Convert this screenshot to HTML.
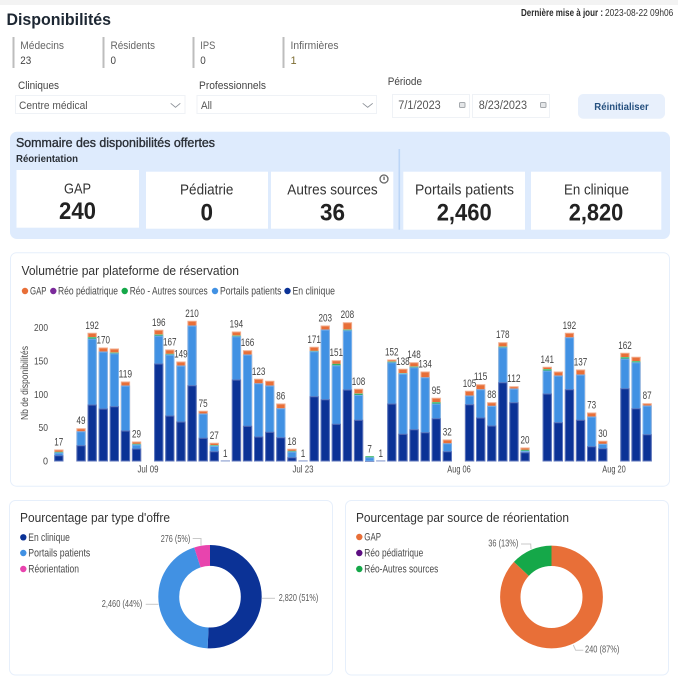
<!DOCTYPE html>
<html lang="fr">
<head>
<meta charset="utf-8">
<title>Disponibilités</title>
<style>
html,body{margin:0;padding:0;background:#fff;width:678px;height:681px;overflow:hidden}
svg{display:block}
text{font-family:"Liberation Sans",sans-serif;fill:#444}
.n{font-size:10.8px;fill:#444;text-anchor:middle}
.ax{font-size:10.5px;fill:#4a4a4a}
.lg{font-size:10.8px;fill:#4a4a4a}
.t{font-size:13px;fill:#333}
.k{font-size:11px;fill:#666}
.v{font-size:11px;fill:#444}
.f{font-size:11px;fill:#444}
.cl{font-size:14.5px;fill:#333;text-anchor:middle}
.cv{font-size:24px;font-weight:bold;fill:#222;text-anchor:middle}
.d{font-size:10.5px;fill:#5a5a5a}
.card{fill:#fff;stroke:#e6effb;stroke-width:1}
.in{fill:#fff;stroke:#eff2f6;stroke-width:1}
.w{fill:#fff}
.ln{fill:none;stroke:#c8c8c8;stroke-width:1}
</style>
</head>
<body>
<svg width="678" height="681" viewBox="0 0 678 681" xmlns="http://www.w3.org/2000/svg">
<rect x="0" y="0" width="678" height="5" fill="#f3f3f3"/>

<!-- Header -->
<text x="6.5" y="25" font-size="17" font-weight="bold" style="fill:#1d2733" textLength="104.5" lengthAdjust="spacingAndGlyphs">Disponibilités</text>
<text x="521" y="16" font-size="10" font-weight="bold" style="fill:#2b2b2b" textLength="82" lengthAdjust="spacingAndGlyphs">Dernière mise à jour :</text>
<text x="605" y="16" font-size="10" style="fill:#333" textLength="68.3" lengthAdjust="spacingAndGlyphs">2023-08-22 09h06</text>

<!-- KPI -->
<g fill="#bdbdbd">
<rect x="12.5" y="37" width="2" height="31"/>
<rect x="102.5" y="37" width="2" height="31"/>
<rect x="192.5" y="37" width="2" height="31"/>
<rect x="282.5" y="37" width="2" height="31"/>
</g>
<text class="k" x="20.3" y="49" textLength="43.7" lengthAdjust="spacingAndGlyphs">Médecins</text>
<text class="v" x="20.3" y="64" textLength="11" lengthAdjust="spacingAndGlyphs">23</text>
<text class="k" x="110.5" y="49" textLength="44.5" lengthAdjust="spacingAndGlyphs">Résidents</text>
<text class="v" x="110.5" y="64" textLength="5.5" lengthAdjust="spacingAndGlyphs">0</text>
<text class="k" x="200.3" y="49" textLength="15" lengthAdjust="spacingAndGlyphs">IPS</text>
<text class="v" x="200.3" y="64" textLength="5.5" lengthAdjust="spacingAndGlyphs">0</text>
<text class="k" x="290.5" y="49" textLength="48" lengthAdjust="spacingAndGlyphs">Infirmières</text>
<text class="v" x="290.5" y="64" style="fill:#7d6d33">1</text>

<!-- Filters -->
<text class="f" x="18" y="89" textLength="41" lengthAdjust="spacingAndGlyphs">Cliniques</text>
<rect class="in" x="15.5" y="95.5" width="169.5" height="18"/>
<text class="f" x="19" y="109" style="fill:#555" textLength="68.5" lengthAdjust="spacingAndGlyphs">Centre médical</text>
<path d="M170.7 103.3l4.8 4 4.8-4" fill="none" stroke="#8a8f96" stroke-width=".9"/>

<text class="f" x="199" y="89" textLength="67" lengthAdjust="spacingAndGlyphs">Professionnels</text>
<rect class="in" x="197" y="95.5" width="179.5" height="18"/>
<text class="f" x="201" y="109" style="fill:#555" textLength="11" lengthAdjust="spacingAndGlyphs">All</text>
<path d="M362.7 103.3l5 4 5-4" fill="none" stroke="#8a8f96" stroke-width=".9"/>

<text class="f" x="387.7" y="85" textLength="34.3" lengthAdjust="spacingAndGlyphs">Période</text>
<rect class="in" x="392.5" y="94.5" width="77" height="23"/>
<text x="398.3" y="109" font-size="11.5" style="fill:#555" textLength="42.4" lengthAdjust="spacingAndGlyphs">7/1/2023</text>
<rect x="459.5" y="102.5" width="5.5" height="5" rx="1" fill="#e4e6e8" stroke="#a5a9ad" stroke-width="1"/>
<rect class="in" x="472.5" y="94.5" width="77" height="23"/>
<text x="478.7" y="109" font-size="11.5" style="fill:#555" textLength="48.3" lengthAdjust="spacingAndGlyphs">8/23/2023</text>
<rect x="540.5" y="102.5" width="5.5" height="5" rx="1" fill="#e4e6e8" stroke="#a5a9ad" stroke-width="1"/>

<rect x="578" y="94" width="87" height="24.7" rx="5.5" fill="#e8f0fc"/>
<text x="594.3" y="110" font-size="10.5" font-weight="bold" style="fill:#25507f" textLength="54.4" lengthAdjust="spacingAndGlyphs">Réinitialiser</text>

<!-- Summary -->
<rect x="10" y="131.7" width="660" height="107.3" rx="7" fill="#deebfd"/>
<text x="16" y="147" font-size="13" style="fill:#2a2f36;stroke:#2a2f36;stroke-width:.35" textLength="199" lengthAdjust="spacingAndGlyphs">Sommaire des disponibilités offertes</text>
<text x="16" y="162" font-size="10" font-weight="bold" style="fill:#2a2f36" textLength="62" lengthAdjust="spacingAndGlyphs">Réorientation</text>
<rect class="w" x="16.5" y="170" width="122.5" height="57.7"/>
<rect class="w" x="146" y="171.7" width="122" height="57"/>
<rect class="w" x="271" y="171.7" width="122.3" height="57"/>
<rect x="398.5" y="149" width="1.6" height="80.7" fill="#bcd6f7"/>
<rect class="w" x="403.3" y="171.7" width="121.7" height="58"/>
<rect class="w" x="531" y="171.7" width="130.3" height="58"/>

<text class="cl" x="77.5" y="193.3" textLength="27" lengthAdjust="spacingAndGlyphs">GAP</text>
<text class="cv" x="77.5" y="219" textLength="37" lengthAdjust="spacingAndGlyphs">240</text>
<text class="cl" x="206.7" y="194.3" textLength="53.3" lengthAdjust="spacingAndGlyphs">Pédiatrie</text>
<text class="cv" x="206.7" y="220.3" textLength="12.5" lengthAdjust="spacingAndGlyphs">0</text>
<text class="cl" x="332.5" y="194.3" textLength="90.4" lengthAdjust="spacingAndGlyphs">Autres sources</text>
<text class="cv" x="332.5" y="220.3" textLength="25" lengthAdjust="spacingAndGlyphs">36</text>
<text class="cl" x="464.5" y="194.3" textLength="99" lengthAdjust="spacingAndGlyphs">Portails patients</text>
<text class="cv" x="464.2" y="220.3" textLength="55" lengthAdjust="spacingAndGlyphs">2,460</text>
<text class="cl" x="596.5" y="194.3" textLength="65" lengthAdjust="spacingAndGlyphs">En clinique</text>
<text class="cv" x="596" y="220.3" textLength="54.6" lengthAdjust="spacingAndGlyphs">2,820</text>
<circle cx="384" cy="179" r="4" fill="#fff" stroke="#666" stroke-width="1.3"/>
<rect x="383.4" y="176.6" width="1.3" height="3.4" fill="#666"/>

<!-- Volumetry -->
<rect class="card" x="10.5" y="252.7" width="659" height="233.5" rx="6"/>
<text class="t" x="21.5" y="275" textLength="217.5" lengthAdjust="spacingAndGlyphs">Volumétrie par plateforme de réservation</text>
<circle cx="25" cy="291" r="3.2" fill="#e86f38"/>
<text class="lg" x="30" y="294.500" textLength="16.5" lengthAdjust="spacingAndGlyphs">GAP</text>
<circle cx="53.3" cy="291" r="3.2" fill="#7b2a9b"/>
<text class="lg" x="58" y="294.500" textLength="60" lengthAdjust="spacingAndGlyphs">Réo pédiatrique</text>
<circle cx="124.7" cy="291" r="3.2" fill="#15a849"/>
<text class="lg" x="129.7" y="294.500" textLength="78" lengthAdjust="spacingAndGlyphs">Réo - Autres sources</text>
<circle cx="215" cy="291" r="3.2" fill="#4191e3"/>
<text class="lg" x="220" y="294.500" textLength="61.5" lengthAdjust="spacingAndGlyphs">Portails patients</text>
<circle cx="287.5" cy="291" r="3.2" fill="#0b3296"/>
<text class="lg" x="292.5" y="294.500" textLength="42.5" lengthAdjust="spacingAndGlyphs">En clinique</text>

<text class="ax" x="48" y="464.500" text-anchor="end" textLength="5" lengthAdjust="spacingAndGlyphs">0</text>
<text class="ax" x="48" y="431" text-anchor="end" textLength="9.500" lengthAdjust="spacingAndGlyphs">50</text>
<text class="ax" x="48" y="398" text-anchor="end" textLength="14" lengthAdjust="spacingAndGlyphs">100</text>
<text class="ax" x="48" y="364.500" text-anchor="end" textLength="14" lengthAdjust="spacingAndGlyphs">150</text>
<text class="ax" x="48" y="331" text-anchor="end" textLength="14" lengthAdjust="spacingAndGlyphs">200</text>
<text class="ax" transform="translate(28 383) rotate(-90)" text-anchor="middle" textLength="74" lengthAdjust="spacingAndGlyphs">Nb de disponibilités</text>
<text class="ax" x="148" y="472.500" text-anchor="middle" textLength="21" lengthAdjust="spacingAndGlyphs">Jul 09</text>
<text class="ax" x="303" y="472.500" text-anchor="middle" textLength="21" lengthAdjust="spacingAndGlyphs">Jul 23</text>
<text class="ax" x="459" y="472.500" text-anchor="middle" textLength="23.5" lengthAdjust="spacingAndGlyphs">Aug 06</text>
<text class="ax" x="614" y="472.500" text-anchor="middle" textLength="23.5" lengthAdjust="spacingAndGlyphs">Aug 20</text>

<!-- Bars: orange -->
<path fill="#e86f38" stroke="#f2a988" stroke-width="1" d="M54.7 450V461h8.300V450zM76.900 428.700V461h8.300V428.700zM88 333.300V461h8.300V333.300zM99.100 348V461h8.300V348zM110.200 349V461h8.300V349zM121.300 382V461h8.300V382zM132.400 442V461h8.300V442zM154.600 330.300V461h8.300V330.300zM165.700 350V461h8.300V350zM176.800 362V461h8.300V362zM187.900 321.300V461h8.300V321.300zM199 411.300V461h8.300V411.300zM210.100 443.300V461h8.300V443.300zM232.300 332V461h8.300V332zM243.400 350.700V461h8.300V350.700zM254.500 379.300V461h8.300V379.300zM265.600 381.300V461h8.300V381.300zM276.700 404V461h8.300V404zM287.800 449.300V461h8.300V449.300zM310 347.300V461h8.300V347.300zM321.100 326V461h8.300V326zM332.200 360.700V461h8.300V360.700zM343.300 322.700V461h8.300V322.700zM354.400 389.300V461h8.300V389.300zM387.700 360V461h8.300V360zM398.800 369.300V461h8.300V369.300zM409.900 362.700V461h8.300V362.700zM421 372V461h8.300V372zM432.100 398.300V461h8.300V398.300zM443.200 440V461h8.300V440zM465.400 391.300V461h8.300V391.300zM476.500 384.700V461h8.300V384.700zM487.600 402.700V461h8.300V402.700zM498.700 342.700V461h8.300V342.700zM509.800 386.700V461h8.300V386.700zM520.900 448V461h8.300V448zM543.100 367.300V461h8.300V367.300zM554.200 372V461h8.300V372zM565.300 333.300V461h8.300V333.300zM576.400 370V461h8.300V370zM587.500 413V461h8.300V413zM598.600 441.300V461h8.300V441.300zM620.800 353.300V461h8.300V353.300zM631.900 357.300V461h8.300V357.300zM643 403.700V461h8.300V403.700z"/>
<!-- Bars: green -->
<path fill="#15a849" stroke="#8ad4a4" stroke-width=".6" d="M54.7 452V461h8.300V452zM88 337.300V461h8.300V337.300zM110.200 352.700V461h8.300V352.700zM132.400 444V461h8.300V444zM154.600 334.700V461h8.300V334.700zM165.700 354V461h8.300V354zM210.100 445.300V461h8.300V445.300zM232.300 335.700V461h8.300V335.700zM287.800 451V461h8.300V451zM310 351V461h8.300V351zM332.200 364V461h8.300V364zM343.300 329.700V461h8.300V329.700zM354.400 393.700V461h8.300V393.700zM365.500 456.300V461h8.300V456.300zM387.700 361.700V461h8.300V361.700zM398.800 373.300V461h8.300V373.300zM409.900 366.700V461h8.300V366.700zM432.100 402.300V461h8.300V402.300zM498.700 346.700V461h8.300V346.700zM520.900 450V461h8.300V450zM543.100 369.300V461h8.300V369.300zM620.800 357.300V461h8.300V357.300zM631.900 361.300V461h8.300V361.300z"/>
<!-- Bars: blue -->
<path fill="#4191e3" stroke="#7fb4ec" stroke-width="1" d="M54.7 453V461h8.300V453zM76.900 431.700V461h8.300V431.700zM88 339V461h8.300V339zM99.100 352V461h8.300V352zM110.200 353.700V461h8.300V353.700zM121.300 386V461h8.300V386zM132.400 445V461h8.300V445zM154.600 336V461h8.300V336zM165.700 355V461h8.300V355zM176.800 366V461h8.300V366zM187.900 326V461h8.300V326zM199 414V461h8.300V414zM210.100 446.300V461h8.300V446.300zM232.300 336.700V461h8.300V336.700zM243.400 355V461h8.300V355zM254.500 383.700V461h8.300V383.700zM265.600 386V461h8.300V386zM276.700 408.700V461h8.300V408.700zM287.800 452V461h8.300V452zM310 351.700V461h8.300V351.700zM321.100 330V461h8.300V330zM332.200 365.700V461h8.300V365.700zM343.300 330.700V461h8.300V330.700zM354.400 395.300V461h8.300V395.300zM365.500 457.700V461h8.300V457.700zM387.700 362.700V461h8.300V362.700zM398.800 374V461h8.300V374zM409.900 367.700V461h8.300V367.700zM421 377.700V461h8.300V377.700zM432.100 404V461h8.300V404zM443.200 443.700V461h8.300V443.700zM465.400 396V461h8.300V396zM476.500 389.700V461h8.300V389.700zM487.600 406.300V461h8.300V406.300zM498.700 347.700V461h8.300V347.700zM509.800 389V461h8.300V389zM520.900 451.300V461h8.300V451.300zM543.100 371V461h8.300V371zM554.200 376V461h8.300V376zM565.300 337.700V461h8.300V337.700zM576.400 375V461h8.300V375zM587.500 417V461h8.300V417zM598.600 444.300V461h8.300V444.300zM620.800 359V461h8.300V359zM631.900 362.700V461h8.300V362.700zM643 406V461h8.300V406z"/>
<!-- Bars: navy -->
<path fill="#0b3296" stroke="#5c74bb" stroke-width="1" d="M54.7 455.700V461h8.300V455.700zM76.900 445.700V461h8.300V445.700zM88 405V461h8.300V405zM99.100 409V461h8.300V409zM110.200 406.700V461h8.300V406.700zM121.300 431V461h8.300V431zM132.400 449V461h8.300V449zM154.600 364V461h8.300V364zM165.700 416V461h8.300V416zM176.800 422V461h8.300V422zM187.900 385.700V461h8.300V385.700zM199 438.300V461h8.300V438.300zM210.100 451.700V461h8.300V451.700zM232.300 380V461h8.300V380zM243.400 426.300V461h8.300V426.300zM254.500 437V461h8.300V437zM265.600 432.300V461h8.300V432.300zM276.700 437.700V461h8.300V437.700zM287.800 457.700V461h8.300V457.700zM310 396.700V461h8.300V396.700zM321.100 399.700V461h8.300V399.700zM332.200 424.300V461h8.300V424.300zM343.300 390V461h8.300V390zM354.400 420.300V461h8.300V420.300zM387.700 404V461h8.300V404zM398.800 434.300V461h8.300V434.300zM409.900 429.700V461h8.300V429.700zM421 432.700V461h8.300V432.700zM432.100 418.700V461h8.300V418.700zM443.200 451.700V461h8.300V451.700zM465.400 404.700V461h8.300V404.700zM476.500 418V461h8.300V418zM487.600 426V461h8.300V426zM498.700 382.700V461h8.300V382.700zM509.800 402.700V461h8.300V402.700zM520.900 452.700V461h8.300V452.700zM543.100 394V461h8.300V394zM554.200 422.700V461h8.300V422.700zM565.300 389.700V461h8.300V389.700zM576.400 420.300V461h8.300V420.300zM587.500 446.700V461h8.300V446.700zM598.600 448.700V461h8.300V448.700zM620.800 388.700V461h8.300V388.700zM631.900 408.700V461h8.300V408.700zM643 434.700V461h8.300V434.700z"/>
<!-- Thin bars -->
<path fill="#8598cb" stroke="#b4c0e0" stroke-width="1" d="M221.200 460.500h8.300v.8h-8.300zM298.900 460.500h8.300v.8h-8.300zM376.600 460.500h8.300v.8h-8.300z"/>
<path fill="none" stroke="#8598cb" stroke-width="1" d="M365 461.500h9.300"/>

<!-- Bar values -->
<g>
<text class="n" x="58.800" y="445.500" textLength="9" lengthAdjust="spacingAndGlyphs">17</text>
<text class="n" x="81" y="424.200" textLength="9" lengthAdjust="spacingAndGlyphs">49</text>
<text class="n" x="92.100" y="328.800" textLength="13.500" lengthAdjust="spacingAndGlyphs">192</text>
<text class="n" x="103.200" y="343.500" textLength="13.500" lengthAdjust="spacingAndGlyphs">170</text>
<text class="n" x="125.400" y="377.500" textLength="13.500" lengthAdjust="spacingAndGlyphs">119</text>
<text class="n" x="136.500" y="437.500" textLength="9" lengthAdjust="spacingAndGlyphs">29</text>
<text class="n" x="158.700" y="325.800" textLength="13.500" lengthAdjust="spacingAndGlyphs">196</text>
<text class="n" x="169.800" y="345.500" textLength="13.500" lengthAdjust="spacingAndGlyphs">167</text>
<text class="n" x="180.900" y="357.500" textLength="13.500" lengthAdjust="spacingAndGlyphs">149</text>
<text class="n" x="192" y="316.800" textLength="13.500" lengthAdjust="spacingAndGlyphs">210</text>
<text class="n" x="203.100" y="406.800" textLength="9" lengthAdjust="spacingAndGlyphs">75</text>
<text class="n" x="214.200" y="438.800" textLength="9" lengthAdjust="spacingAndGlyphs">27</text>
<text class="n" x="225.300" y="457" textLength="4.500" lengthAdjust="spacingAndGlyphs">1</text>
<text class="n" x="236.400" y="327.500" textLength="13.500" lengthAdjust="spacingAndGlyphs">194</text>
<text class="n" x="247.500" y="346.200" textLength="13.500" lengthAdjust="spacingAndGlyphs">166</text>
<text class="n" x="258.600" y="374.800" textLength="13.500" lengthAdjust="spacingAndGlyphs">123</text>
<text class="n" x="280.800" y="399.500" textLength="9" lengthAdjust="spacingAndGlyphs">86</text>
<text class="n" x="291.900" y="444.800" textLength="9" lengthAdjust="spacingAndGlyphs">18</text>
<text class="n" x="303" y="457" textLength="4.500" lengthAdjust="spacingAndGlyphs">1</text>
<text class="n" x="314.100" y="342.800" textLength="13.500" lengthAdjust="spacingAndGlyphs">171</text>
<text class="n" x="325.200" y="321.500" textLength="13.500" lengthAdjust="spacingAndGlyphs">203</text>
<text class="n" x="336.300" y="356.200" textLength="13.500" lengthAdjust="spacingAndGlyphs">151</text>
<text class="n" x="347.400" y="318.200" textLength="13.500" lengthAdjust="spacingAndGlyphs">208</text>
<text class="n" x="358.500" y="384.800" textLength="13.500" lengthAdjust="spacingAndGlyphs">108</text>
<text class="n" x="369.600" y="452.500" textLength="4.500" lengthAdjust="spacingAndGlyphs">7</text>
<text class="n" x="380.700" y="457" textLength="4.500" lengthAdjust="spacingAndGlyphs">1</text>
<text class="n" x="391.800" y="355.500" textLength="13.500" lengthAdjust="spacingAndGlyphs">152</text>
<text class="n" x="402.900" y="364.800" textLength="13.500" lengthAdjust="spacingAndGlyphs">138</text>
<text class="n" x="414" y="358.200" textLength="13.500" lengthAdjust="spacingAndGlyphs">148</text>
<text class="n" x="425.100" y="367.500" textLength="13.500" lengthAdjust="spacingAndGlyphs">134</text>
<text class="n" x="436.200" y="393.800" textLength="9" lengthAdjust="spacingAndGlyphs">95</text>
<text class="n" x="447.300" y="435.500" textLength="9" lengthAdjust="spacingAndGlyphs">32</text>
<text class="n" x="469.500" y="386.800" textLength="13.500" lengthAdjust="spacingAndGlyphs">105</text>
<text class="n" x="480.600" y="380.200" textLength="13.500" lengthAdjust="spacingAndGlyphs">115</text>
<text class="n" x="491.700" y="398.200" textLength="9" lengthAdjust="spacingAndGlyphs">88</text>
<text class="n" x="502.800" y="338.200" textLength="13.500" lengthAdjust="spacingAndGlyphs">178</text>
<text class="n" x="513.900" y="382.200" textLength="13.500" lengthAdjust="spacingAndGlyphs">112</text>
<text class="n" x="525" y="443.500" textLength="9" lengthAdjust="spacingAndGlyphs">20</text>
<text class="n" x="547.200" y="362.800" textLength="13.500" lengthAdjust="spacingAndGlyphs">141</text>
<text class="n" x="569.400" y="328.800" textLength="13.500" lengthAdjust="spacingAndGlyphs">192</text>
<text class="n" x="580.500" y="365.500" textLength="13.500" lengthAdjust="spacingAndGlyphs">137</text>
<text class="n" x="591.600" y="408.500" textLength="9" lengthAdjust="spacingAndGlyphs">73</text>
<text class="n" x="602.700" y="436.800" textLength="9" lengthAdjust="spacingAndGlyphs">30</text>
<text class="n" x="625" y="348.800" textLength="13.500" lengthAdjust="spacingAndGlyphs">162</text>
<text class="n" x="647.100" y="399.200" textLength="9" lengthAdjust="spacingAndGlyphs">87</text>
</g>

<!-- Card: type d'offre -->
<rect class="card" x="9.500" y="500.500" width="323" height="174.500" rx="6"/>
<text class="t" x="20" y="522" textLength="150" lengthAdjust="spacingAndGlyphs">Pourcentage par type d'offre</text>
<circle cx="23.300" cy="537.300" r="3.200" fill="#0b3296"/>
<text class="lg" x="28.300" y="540.800" textLength="41.500" lengthAdjust="spacingAndGlyphs">En clinique</text>
<circle cx="23.300" cy="553" r="3.200" fill="#4191e3"/>
<text class="lg" x="28.300" y="556.600" textLength="62" lengthAdjust="spacingAndGlyphs">Portails patients</text>
<circle cx="23.300" cy="569" r="3.200" fill="#e844ae"/>
<text class="lg" x="28.300" y="572.600" textLength="50.700" lengthAdjust="spacingAndGlyphs">Réorientation</text>

<g fill="none" stroke-width="20.900" transform="rotate(-90 210 596.700)">
<circle cx="210" cy="596.700" r="41.250" pathLength="100" stroke="#0b3296" stroke-dasharray="50.760 100"/>
<circle cx="210" cy="596.700" r="41.250" pathLength="100" stroke="#4191e3" stroke-dasharray="44.280 100" stroke-dashoffset="-50.760"/>
<circle cx="210" cy="596.700" r="41.250" pathLength="100" stroke="#e844ae" stroke-dasharray="4.960 100" stroke-dashoffset="-95.040"/>
</g>
<path class="ln" d="M192.700 538.500H201V545.700"/>
<path class="ln" d="M145.700 604.300H158.500"/>
<path class="ln" d="M262 598.300H275"/>
<text class="d" x="160.700" y="542" textLength="29.600" lengthAdjust="spacingAndGlyphs">276 (5%)</text>
<text class="d" x="101.700" y="607" textLength="40.600" lengthAdjust="spacingAndGlyphs">2,460 (44%)</text>
<text class="d" x="278.700" y="601" textLength="39.600" lengthAdjust="spacingAndGlyphs">2,820 (51%)</text>

<!-- Card: source -->
<rect class="card" x="345.500" y="500.500" width="323" height="174.500" rx="6"/>
<text class="t" x="356" y="522" textLength="213" lengthAdjust="spacingAndGlyphs">Pourcentage par source de réorientation</text>
<circle cx="359.300" cy="537" r="3.200" fill="#e86f38"/>
<text class="lg" x="364.300" y="540.600" textLength="16.700" lengthAdjust="spacingAndGlyphs">GAP</text>
<circle cx="359.300" cy="553" r="3.200" fill="#5d0f82"/>
<text class="lg" x="364.300" y="556.600" textLength="59" lengthAdjust="spacingAndGlyphs">Réo pédiatrique</text>
<circle cx="359.300" cy="569" r="3.200" fill="#15a849"/>
<text class="lg" x="364.300" y="572.600" textLength="74" lengthAdjust="spacingAndGlyphs">Réo-Autres sources</text>

<g fill="none" stroke-width="20.400" transform="rotate(-90 551.500 597)">
<circle cx="551.500" cy="597" r="41.200" pathLength="100" stroke="#e86f38" stroke-dasharray="86.960 100"/>
<circle cx="551.500" cy="597" r="41.200" pathLength="100" stroke="#15a849" stroke-dasharray="13.040 100" stroke-dashoffset="-86.960"/>
</g>
<path class="ln" d="M521 544H530.700L531 549"/>
<path class="ln" d="M573.300 645L575.700 650.300H583.300"/>
<text class="d" x="488.300" y="546.700" textLength="30" lengthAdjust="spacingAndGlyphs">36 (13%)</text>
<text class="d" x="585" y="652.700" textLength="34.300" lengthAdjust="spacingAndGlyphs">240 (87%)</text>
</svg>
</body>
</html>
